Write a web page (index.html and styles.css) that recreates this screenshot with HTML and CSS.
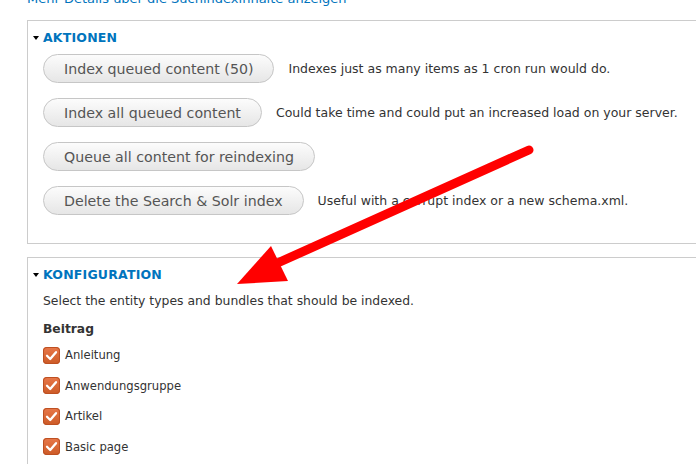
FILE: index.html
```html
<!DOCTYPE html>
<html>
<head>
<meta charset="utf-8">
<link rel="stylesheet" href="styles.css">
</head>
<body>
<div class="page">
  <a class="toplink" href="#">Mehr Details über die Suchindexinhalte anzeigen</a>
  <div class="fieldset first">
    <div class="legend"><span class="tri"></span>AKTIONEN</div>
    <div class="actions">
      <div class="row"><button class="btn">Index queued content (50)</button><span class="desc">Indexes just as many items as 1 cron run would do.</span></div>
      <div class="row"><button class="btn">Index all queued content</button><span class="desc">Could take time and could put an increased load on your server.</span></div>
      <div class="row"><button class="btn">Queue all content for reindexing</button></div>
      <div class="row"><button class="btn">Delete the Search &amp; Solr index</button><span class="desc">Useful with a corrupt index or a new schema.xml.</span></div>
    </div>
  </div>
  <div class="fieldset second">
    <div class="legend"><span class="tri"></span>KONFIGURATION</div>
    <div class="intro">Select the entity types and bundles that should be indexed.</div>
    <div class="group">Beitrag</div>
    <div class="checks">
      <label class="check"><span class="box"><svg viewBox="0 0 17 17" width="17" height="17"><path d="M4 8.8 L7.2 12 L13 5.2" fill="none" stroke="#fff" stroke-width="2.3" stroke-linecap="round" stroke-linejoin="round"/></svg></span>Anleitung</label>
      <label class="check"><span class="box"><svg viewBox="0 0 17 17" width="17" height="17"><path d="M4 8.8 L7.2 12 L13 5.2" fill="none" stroke="#fff" stroke-width="2.3" stroke-linecap="round" stroke-linejoin="round"/></svg></span>Anwendungsgruppe</label>
      <label class="check"><span class="box"><svg viewBox="0 0 17 17" width="17" height="17"><path d="M4 8.8 L7.2 12 L13 5.2" fill="none" stroke="#fff" stroke-width="2.3" stroke-linecap="round" stroke-linejoin="round"/></svg></span>Artikel</label>
      <label class="check"><span class="box"><svg viewBox="0 0 17 17" width="17" height="17"><path d="M4 8.8 L7.2 12 L13 5.2" fill="none" stroke="#fff" stroke-width="2.3" stroke-linecap="round" stroke-linejoin="round"/></svg></span>Basic page</label>
    </div>
  </div>
  <svg class="arrow" width="696" height="464" viewBox="0 0 696 464">
    <line x1="529" y1="150" x2="262" y2="270" stroke="#ff0000" stroke-width="9" stroke-linecap="round"/>
    <polygon points="237,284 271,246 288,281" fill="#ff0000"/>
  </svg>
</div>
</body>
</html>
```
FILE: styles.css
```css
html, body {
  margin: 0;
  padding: 0;
  background: #fff;
}
.page {
  position: relative;
  width: 696px;
  height: 464px;
  overflow: hidden;
  font-family: "DejaVu Sans", Verdana, sans-serif;
  color: #333;
}
.toplink {
  display: block;
  margin: -9px 0 0 27px;
  height: 16px;
  line-height: 16px;
  font-size: 13px;
  color: #0074bd;
  text-decoration: none;
}
.fieldset {
  margin-left: 27px;
  width: 720px;
  border: 1px solid #cccccc;
  box-sizing: border-box;
}
.first {
  margin-top: 13px;
  height: 224px;
}
.second {
  margin-top: 13px;
  height: 260px;
}
.legend {
  display: flex;
  align-items: center;
  height: 16px;
  margin: 8px 0 0 5px;
  font-size: 12.5px;
  font-weight: bold;
  letter-spacing: 0.2px;
  color: #0074bd;
}
.tri {
  display: inline-block;
  width: 0;
  height: 0;
  border-left: 3.5px solid transparent;
  border-right: 3.5px solid transparent;
  border-top: 4px solid #000;
  margin-right: 4px;
  margin-top: 2px;
}
.actions {
  display: flex;
  flex-direction: column;
  gap: 15px;
  margin: 9px 0 0 15px;
}
.row {
  display: flex;
  align-items: center;
  height: 29px;
}
.btn {
  height: 29px;
  padding: 0 20px;
  border: 1px solid #c6c6c6;
  border-radius: 15px;
  background: linear-gradient(#fcfcfc, #e6e6e6);
  font-family: "DejaVu Sans", Verdana, sans-serif;
  font-size: 14.2px;
  color: #555;
  box-sizing: border-box;
  margin-right: 14px;
}
.desc {
  font-size: 12.5px;
  color: #333;
}
.intro {
  margin: 11px 0 0 15px;
  font-size: 12.4px;
  line-height: 16px;
}
.group {
  margin: 12px 0 0 15px;
  font-size: 12.3px;
  font-weight: bold;
  line-height: 16px;
}
.checks {
  display: flex;
  flex-direction: column;
  margin: 9px 0 0 15px;
  gap: 12.6px;
}
.check {
  display: flex;
  align-items: center;
  height: 18px;
  font-size: 11.6px;
  color: #333;
}
.box {
  display: inline-flex;
  width: 17px;
  height: 17px;
  border-radius: 4px;
  background: linear-gradient(#e8784a, #cc5a26);
  box-shadow: inset 0 0 0 1px #bd5022;
  margin-right: 5px;
}
.arrow {
  position: absolute;
  left: 0;
  top: 0;
  pointer-events: none;
}
```
